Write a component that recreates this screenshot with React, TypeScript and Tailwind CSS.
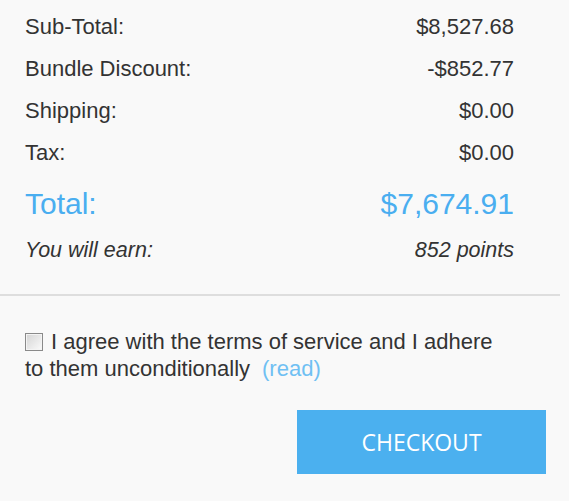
const rows = [
  { label: "Sub-Total:", value: "$8,527.68" },
  { label: "Bundle Discount:", value: "-$852.77" },
  { label: "Shipping:", value: "$0.00" },
  { label: "Tax:", value: "$0.00" },
];

export default function App() {
  return (
    <div
      className="min-h-[501px] w-[569px] bg-[#f9f9f9] text-[#333] pt-[6px]"
      style={{ fontFamily: '"Liberation Sans", Arial, sans-serif' }}
    >
      <div className="ml-[25px] w-[489px]">
        {rows.map((row) => (
          <div key={row.label} className="flex justify-between text-[22px] leading-[42px]">
            <span>{row.label}</span>
            <span>{row.value}</span>
          </div>
        ))}
        <div className="mt-[7px] flex justify-between text-[30px] leading-[46px] text-[#4aaef0]">
          <span>Total:</span>
          <span>$7,674.91</span>
        </div>
        <div className="mt-[2px] flex justify-between text-[21.5px] leading-[42px] italic">
          <span>You will earn:</span>
          <span>852 points</span>
        </div>
      </div>

      <div className="mt-[23px] w-[560px] border-t-2 border-[#dedede]" />

      <div className="ml-[25px] mt-[32px] w-[480px] text-[22px] leading-[27px]">
        <input
          type="checkbox"
          className="mr-[8px] inline-block h-[18px] w-[18px] translate-y-[2px] appearance-none border border-[#8a8a8a] bg-gradient-to-br from-[#d4d4d4] to-[#fbfbfb] shadow-[inset_0_0_0_1px_#f4f4f4]"
        />
        I agree with the terms of service and I adhere to them unconditionally
        <a className="ml-[12px] text-[#6fc0f3]">(read)</a>
      </div>

      <div className="mt-[28px] flex justify-end pr-[23px]">
        <button
          className="h-[64px] w-[249px] bg-[#4bb0ef] text-[23px] text-white"
          style={{ fontFamily: '"Open Sans", sans-serif' }}
        >
          CHECKOUT
        </button>
      </div>
    </div>
  );
}
